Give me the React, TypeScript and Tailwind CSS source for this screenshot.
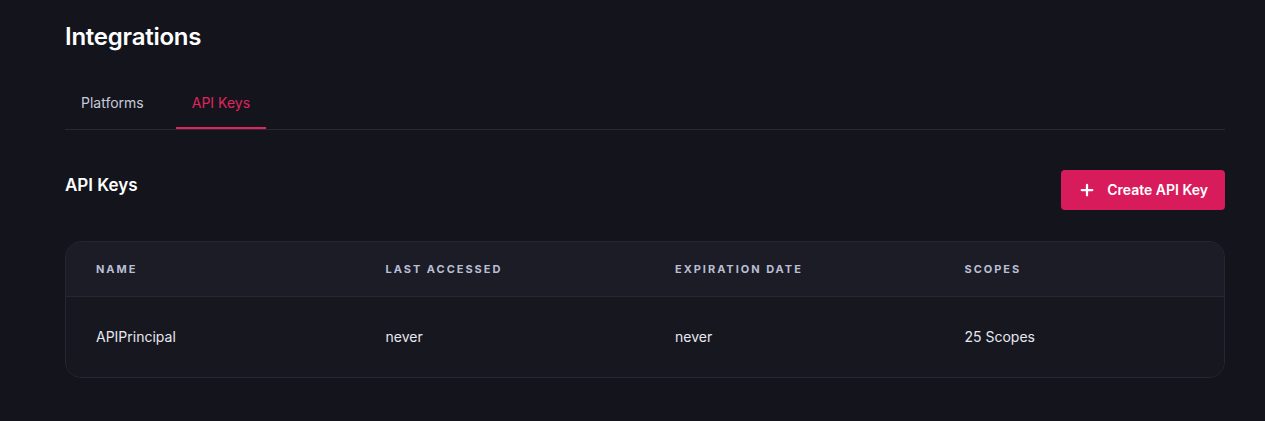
import { Plus } from 'lucide-react';

const columns = ['Name', 'Last Accessed', 'Expiration Date', 'Scopes'];

const rows = [{ name: 'APIPrincipal', lastAccessed: 'never', expiration: 'never', scopes: '25 Scopes' }];

export default function App() {
  return (
    <div
      className="min-h-[421px] bg-[#14141c] pl-[65px] pr-[40px] pt-[22px]"
      style={{ fontFamily: 'Inter, "Liberation Sans", sans-serif' }}
    >
      <h1 className="text-[24px] font-semibold leading-[30px] tracking-[-0.01em] text-white">Integrations</h1>

      <nav className="mt-[41px] flex gap-4 border-b border-[#2a2a35]">
        <button className="border-b-2 border-transparent px-4 pb-[14px] text-sm text-[#c7cbd9]">Platforms</button>
        <button className="border-b-2 border-[#e0245e] px-4 pb-[14px] text-sm text-[#e0245e]">API Keys</button>
      </nav>

      <div className="mt-[40px] flex items-start justify-between">
        <h2 className="mt-[3px] text-[17px] font-semibold text-white">API Keys</h2>
        <button className="flex h-10 items-center gap-[11px] rounded bg-[#d81b5b] px-[17px] text-sm font-semibold text-white">
          <Plus className="h-[18px] w-[18px]" strokeWidth={3} />
          Create API Key
        </button>
      </div>

      <div className="mt-[31px] overflow-hidden rounded-2xl border border-[#272733]">
        <div className="grid h-[55px] grid-cols-4 items-center border-b border-[#272733] bg-[#1c1c27]">
          {columns.map((col) => (
            <div key={col} className="pl-[30px] text-[11px] font-bold uppercase tracking-[0.18em] text-[#b9bfd3]">
              {col}
            </div>
          ))}
        </div>
        {rows.map((row) => (
          <div key={row.name} className="grid h-[80px] grid-cols-4 items-center bg-[#171720] text-sm text-[#e6e8ef]">
            <div className="pl-[30px]">{row.name}</div>
            <div className="pl-[30px]">{row.lastAccessed}</div>
            <div className="pl-[30px]">{row.expiration}</div>
            <div className="pl-[30px]">{row.scopes}</div>
          </div>
        ))}
      </div>
    </div>
  );
}
